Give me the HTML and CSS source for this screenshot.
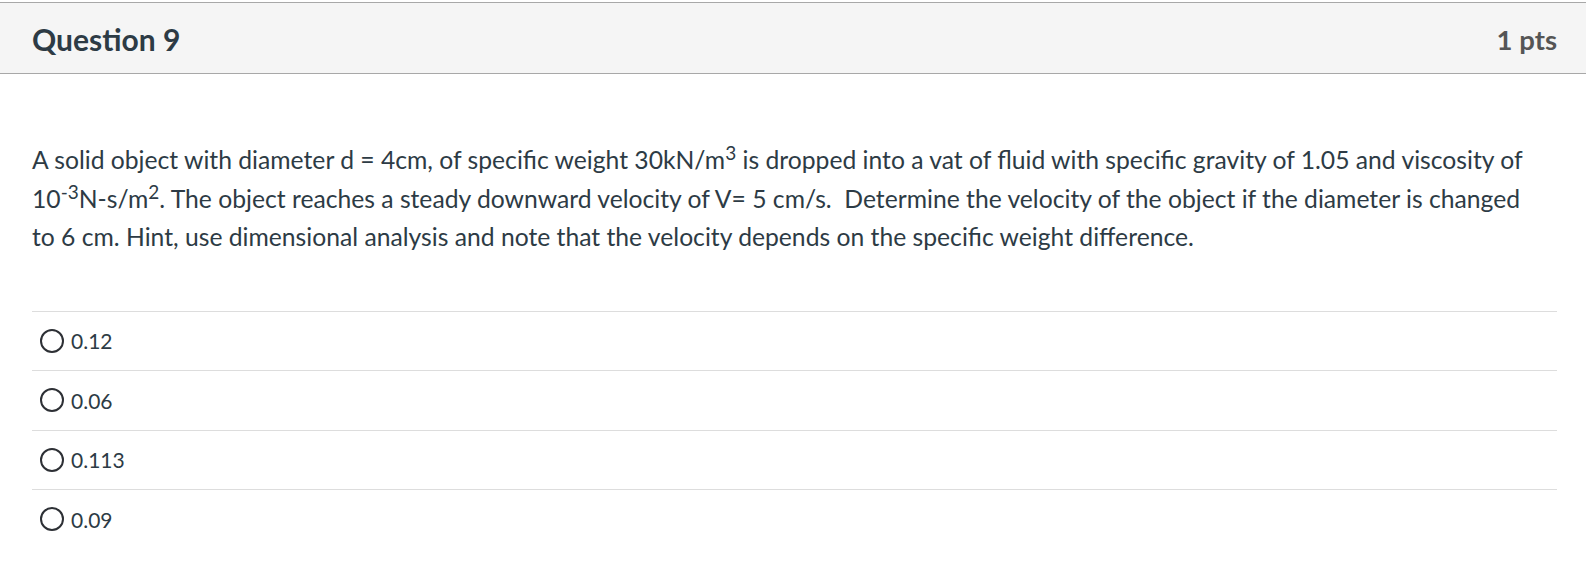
FILE: index.html
```html
<!DOCTYPE html>
<html>
<head>
<meta charset="utf-8">
<link rel="stylesheet" href="styles.css">
</head>
<body>
<div class="question">
  <div class="header">
    <span class="title">Question 9</span>
    <span class="points">1 pts</span>
  </div>
  <div class="content">
    <p class="text">A solid object with diameter d = 4cm, of specific weight 30kN/m<sup>3</sup> is dropped into a vat of fluid with specific gravity of 1.05 and viscosity of<br><span class="nw">10<sup>-3</sup>N-s/m<sup>2</sup>.</span> The object reaches a steady downward velocity of V= 5 cm/s.&nbsp; Determine the velocity of the object if the diameter is changed<br>to 6 cm. Hint, use dimensional analysis and note that the velocity depends on the specific weight difference.</p>
    <div class="answers">
      <div class="answer"><span class="radio"></span><span class="label">0.12</span></div>
      <div class="answer"><span class="radio"></span><span class="label">0.06</span></div>
      <div class="answer"><span class="radio"></span><span class="label">0.113</span></div>
      <div class="answer"><span class="radio"></span><span class="label">0.09</span></div>
    </div>
  </div>
</div>
</body>
</html>
```
FILE: styles.css
```css
html, body {
  margin: 0;
  padding: 0;
  background: #fff;
}
body {
  font-family: Lato, "Liberation Sans", sans-serif;
  color: #2d3b45;
  padding-top: 2px;
}
.question {
  width: 1586px;
}
.header {
  display: flex;
  justify-content: space-between;
  align-items: center;
  height: 72px;
  box-sizing: border-box;
  background: #f5f5f5;
  border-top: 1px solid #a8a8a8;
  border-bottom: 1px solid #a8a8a8;
  padding: 2px 29px 0 32px;
}
.title {
  font-size: 30px;
  font-weight: 700;
  color: #2d3b45;
}
.points {
  font-size: 27.5px;
  font-weight: 700;
  color: #555555;
}
.content {
  padding: 0 29px 0 32px;
}
.text {
  margin: 67px 0 0 0;
  font-size: 24.7px;
  line-height: 38.5px;
  color: #2d3b45;
}
.nw {
  white-space: nowrap;
}
.text sup {
  font-size: 19px;
  line-height: 0;
  vertical-align: 0.45em;
}
.answers {
  margin-top: 54px;
}
.answer {
  display: flex;
  align-items: center;
  height: 59.5px;
  border-top: 1px solid #dddddd;
  box-sizing: border-box;
  padding-left: 8px;
}
.radio {
  width: 20px;
  height: 20px;
  border: 2px solid #2d3035;
  border-radius: 50%;
  margin-right: 7px;
  flex: none;
}
.label {
  font-size: 21px;
  color: #2d3b45;
}
```
